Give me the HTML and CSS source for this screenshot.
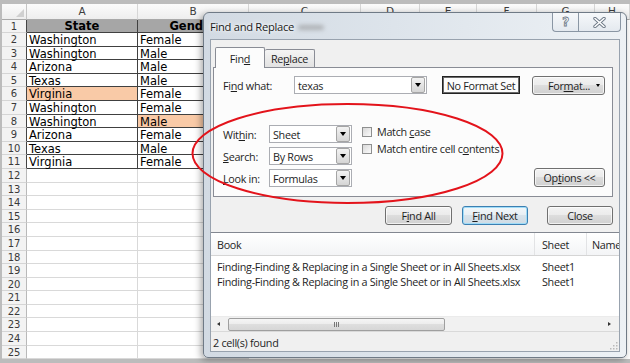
FILE: index.html
```html
<!DOCTYPE html>
<html>
<head>
<meta charset="utf-8">
<title>Find and Replace</title>
<link rel="stylesheet" href="styles.css">
</head>
<body>
<div class="screen">
  <div class="sheet">
    <div class="corner"><span class="tri"></span></div>
    <div class="ch">A</div><div class="ch">B</div><div class="ch">C</div><div class="ch">D</div><div class="ch">E</div><div class="ch">F</div><div class="ch">G</div><div class="ch">H</div>

    <div class="rh t">1</div><div class="c t hd">State</div><div class="c t hd">Gender</div><div class="fill"></div>
    <div class="rh t">2</div><div class="c t">Washington</div><div class="c t">Female</div><div class="fill"></div>
    <div class="rh t">3</div><div class="c t">Washington</div><div class="c t">Male</div><div class="fill"></div>
    <div class="rh t">4</div><div class="c t">Arizona</div><div class="c t">Male</div><div class="fill"></div>
    <div class="rh t">5</div><div class="c t">Texas</div><div class="c t">Male</div><div class="fill"></div>
    <div class="rh t">6</div><div class="c t pe">Virginia</div><div class="c t">Female</div><div class="fill"></div>
    <div class="rh t">7</div><div class="c t">Washington</div><div class="c t">Female</div><div class="fill"></div>
    <div class="rh t">8</div><div class="c t">Washington</div><div class="c t pe">Male</div><div class="fill"></div>
    <div class="rh t">9</div><div class="c t">Arizona</div><div class="c t">Female</div><div class="fill"></div>
    <div class="rh t">10</div><div class="c t">Texas</div><div class="c t">Male</div><div class="fill"></div>
    <div class="rh t">11</div><div class="c t">Virginia</div><div class="c t">Female</div><div class="fill"></div>
    <div class="rh">12</div><div class="c"></div><div class="c"></div><div class="fill"></div>
    <div class="rh">13</div><div class="c"></div><div class="c"></div><div class="fill"></div>
    <div class="rh">14</div><div class="c"></div><div class="c"></div><div class="fill"></div>
    <div class="rh">15</div><div class="c"></div><div class="c"></div><div class="fill"></div>
    <div class="rh">16</div><div class="c"></div><div class="c"></div><div class="fill"></div>
    <div class="rh">17</div><div class="c"></div><div class="c"></div><div class="fill"></div>
    <div class="rh">18</div><div class="c"></div><div class="c"></div><div class="fill"></div>
    <div class="rh">19</div><div class="c"></div><div class="c"></div><div class="fill"></div>
    <div class="rh">20</div><div class="c"></div><div class="c"></div><div class="fill"></div>
    <div class="rh">21</div><div class="c"></div><div class="c"></div><div class="fill"></div>
    <div class="rh">22</div><div class="c"></div><div class="c"></div><div class="fill"></div>
    <div class="rh">23</div><div class="c"></div><div class="c"></div><div class="fill"></div>
    <div class="rh">24</div><div class="c"></div><div class="c"></div><div class="fill"></div>
    <div class="rh">25</div><div class="c"></div><div class="c"></div><div class="fill"></div>
  </div>

  <div class="dialog">
    <div class="titlebar">
      <span class="title">Find and Replace</span>
      <span class="smudge"></span>
      <div class="caps">
        <div class="cap help"><span class="q">?</span></div>
        <div class="cap close">
          <svg width="13" height="11" viewBox="0 0 13 11"><path d="M2 1.5 L11 9.5 M11 1.5 L2 9.5" stroke="#6d7886" stroke-width="3.4" stroke-linecap="round" fill="none"/><path d="M2 1.5 L11 9.5 M11 1.5 L2 9.5" stroke="#ffffff" stroke-width="1.6" stroke-linecap="round" fill="none"/></svg>
        </div>
      </div>
    </div>

    <div class="client">
      <div class="tabs">
        <div class="tab on">Fin<u>d</u></div>
        <div class="tab">Re<u>p</u>lace</div>
      </div>
      <div class="panel">
        <div class="findrow">
          <span class="lbl fw">Fi<u>n</u>d what:</span>
          <div class="combo cw"><span>texas</span><span class="ar"></span></div>
          <div class="nofmt">No Format Set</div>
          <div class="btn fmt"><span>For<u>m</u>at...</span><span class="caret"></span></div>
        </div>
        <div class="opts">
          <div class="selects">
            <div class="srow"><span class="lbl sl">Wit<u>h</u>in:</span><div class="combo cs"><span>Sheet</span><span class="ar"></span></div></div>
            <div class="srow"><span class="lbl sl"><u>S</u>earch:</span><div class="combo cs"><span>By Rows</span><span class="ar"></span></div></div>
            <div class="srow"><span class="lbl sl"><u>L</u>ook in:</span><div class="combo cs"><span>Formulas</span><span class="ar"></span></div></div>
          </div>
          <div class="checks">
            <div class="chk"><span class="box"></span><span>Match <u>c</u>ase</span></div>
            <div class="chk"><span class="box"></span><span>Match entire cell c<u>o</u>ntents</span></div>
          </div>
          <div class="btn opt">Op<u>t</u>ions &lt;&lt;</div>
        </div>
      </div>

      <div class="actions">
        <div class="btn a1">F<u>i</u>nd All</div>
        <div class="btn a2 def"><span><u>F</u>ind Next</span></div>
        <div class="btn a3">Close</div>
      </div>

      <div class="results">
        <div class="lhead">
          <div class="col cb">Book</div>
          <div class="col cs2">Sheet</div>
          <div class="col cn">Name</div>
        </div>
        <div class="lrows">
          <div class="lrow"><div class="col cb">Finding-Finding &amp; Replacing in a Single Sheet or in All Sheets.xlsx</div><div class="col cs2">Sheet1</div><div class="col cn"></div></div>
          <div class="lrow"><div class="col cb">Finding-Finding &amp; Replacing in a Single Sheet or in All Sheets.xlsx</div><div class="col cs2">Sheet1</div><div class="col cn"></div></div>
        </div>
        <div class="hscroll">
          <span class="sarrow l"></span>
          <div class="thumb"><span class="grip"></span><span class="grip"></span><span class="grip"></span></div>
          <span class="sarrow r"></span>
        </div>
      </div>

      <div class="status">
        <span>2 cell(s) found</span>
        <svg class="sgrip" width="9" height="9" viewBox="0 0 9 9"><g fill="#b9b9b9"><rect x="7" y="1" width="1.5" height="1.5"/><rect x="4" y="4" width="1.5" height="1.5"/><rect x="7" y="4" width="1.5" height="1.5"/><rect x="1" y="7" width="1.5" height="1.5"/><rect x="4" y="7" width="1.5" height="1.5"/><rect x="7" y="7" width="1.5" height="1.5"/></g></svg>
      </div>
    </div>
  </div>

  <svg class="mark" width="630" height="363" viewBox="0 0 630 363"><ellipse cx="347.5" cy="153.5" rx="155" ry="49.5" fill="none" stroke="#e3131b" stroke-width="2"/></svg>
</div>
</body>
</html>
```

FILE: styles.css
```css
html, body { margin: 0; padding: 0; }

.screen {
  position: relative;
  width: 630px;
  height: 363px;
  overflow: hidden;
  box-sizing: border-box;
  padding: 4px 0 0 2px;
  background: #bcbcbc;
}

/* ---------- spreadsheet ---------- */
.sheet {
  display: grid;
  grid-template-columns: 25px 111px 111px 112px 59px 57px 60px 58px 1fr;
  grid-template-rows: 16px 13px repeat(24, 13.6px);
  background: #fff;
  font-family: "DejaVu Sans", Verdana, sans-serif;
}
.corner {
  box-sizing: border-box;
  background: linear-gradient(#fbfbfb, #eeeeee);
  border-right: 1px solid #c4c4c4;
  border-bottom: 1px solid #a9a9a9;
  display: flex;
  align-items: flex-end;
  justify-content: flex-end;
  padding: 0 2px 2px 0;
}
.tri {
  width: 0; height: 0;
  border-left: 8px solid transparent;
  border-bottom: 8px solid #d0d0d0;
}
.ch {
  box-sizing: border-box;
  background: linear-gradient(#fbfbfb, #eeeeee);
  border-right: 1px solid #d6d6d6;
  border-bottom: 1px solid #a9a9a9;
  font-size: 10.5px;
  line-height: 15px;
  color: #3c3c3c;
  text-align: center;
}
.rh {
  box-sizing: border-box;
  background: #f3f3f3;
  border-right: 1px solid #b9b9b9;
  border-bottom: 1px solid #d5d5d5;
  font-size: 10px;
  line-height: 14px;
  color: #3a3a3a;
  text-align: center;
}
.rh.t { border-right-color: #444; }
.c {
  box-sizing: border-box;
  border-right: 1px solid #d9d9d9;
  border-bottom: 1px solid #d9d9d9;
  font-size: 11.5px;
  line-height: 13px;
  padding: 1px 0 0 2px;
  color: #000;
  white-space: nowrap;
}
.c.t { border-color: #404040; }
.c.hd { background: #a6a6a6; font-weight: bold; text-align: center; padding: 0; line-height: 13px; }
.c.pe { background: #f9caa7; }
.fill { grid-column: span 6; background: #fff; }

/* ---------- dialog ---------- */
.dialog {
  position: absolute;
  left: 203px;
  top: 12px;
  width: 424px;
  height: 346px;
  box-sizing: border-box;
  border: 1px solid #6f7a86;
  border-radius: 6px 6px 5px 5px;
  background: linear-gradient(90deg, #d2dae3 0%, #dde4eb 45%, #edf1f5 100%);
  box-shadow: -2px 2px 7px rgba(0,0,0,0.35);
  padding: 0 6px 5px 6px;
  display: flex;
  flex-direction: column;
  font-family: "Open Sans", "Noto Sans", sans-serif;
  font-size: 10.8px;
  letter-spacing: -0.3px;
  color: #1e1e1e;
}
.titlebar {
  flex: none;
  height: 26px;
  display: flex;
  align-items: flex-start;
}
.title {
  font-size: 11.2px;
  margin-top: 6px;
  color: #1b1b1b;
  text-shadow: 0 0 6px #fff, 0 0 3px #fff;
}
.smudge {
  width: 26px;
  height: 5px;
  margin: 12px 0 0 4px;
  background: #8c8c8c;
  filter: blur(2px);
  opacity: 0.55;
  border-radius: 3px;
}
.caps {
  margin-left: auto;
  margin-right: -1px;
  display: flex;
  height: 19px;
}
.cap {
  box-sizing: border-box;
  border: 1px solid #8a96a4;
  border-top: none;
  background: linear-gradient(#f6f8fa, #e4e9ef);
  display: flex;
  align-items: center;
  justify-content: center;
}
.cap.help { width: 26px; border-right: none; border-radius: 0 0 0 4px; }
.cap.close { width: 43px; border-radius: 0 0 4px 0; }
.q {
  font-family: "DejaVu Sans", sans-serif;
  font-size: 12px;
  font-weight: bold;
  color: #fff;
  -webkit-text-stroke: 0.8px #6d7886;
  line-height: 12px;
}

.client {
  flex: 1;
  min-height: 0;
  border: 1px solid #98a2ae;
  background: #f0f0f0;
  display: flex;
  flex-direction: column;
}
.tabs {
  display: flex;
  align-items: flex-end;
  height: 20px;
  margin: 7px 0 0 4px;
  position: relative;
  z-index: 1;
}
.tab {
  box-sizing: border-box;
  width: 50px;
  height: 18px;
  border: 1px solid #898c95;
  border-bottom: none;
  border-left: none;
  background: linear-gradient(#f4f4f4, #e2e2e2);
  display: flex;
  align-items: center;
  justify-content: center;
  border-radius: 2px 2px 0 0;
}
.tab.on {
  height: 21px;
  margin-bottom: -1px;
  border-left: 1px solid #898c95;
  background: #fcfcfc;
}
.panel {
  box-sizing: border-box;
  margin: 0 6px 0 2px;
  height: 130px;
  border: 1px solid #898c95;
  background: #fcfcfc;
  padding: 8px 7px 9px 9px;
  display: flex;
  flex-direction: column;
}
.findrow { display: flex; align-items: center; height: 18px; }
.lbl { white-space: nowrap; }
.lbl.fw { width: 71px; }
.lbl.sl { width: 46px; }
.combo {
  box-sizing: border-box;
  height: 18px;
  border: 1px solid #abadb3;
  background: #fff;
  display: flex;
  align-items: center;
  padding: 0 1px 0 3px;
}
.combo.cw { width: 133px; }
.combo.cs { width: 83px; }
.ar {
  margin-left: auto;
  box-sizing: border-box;
  width: 14px;
  height: 16px;
  border: 1px solid #a5a5a5;
  border-radius: 2px;
  background: linear-gradient(#f3f3f3, #d5d5d5);
  display: flex;
  align-items: center;
  justify-content: center;
}
.ar::after {
  content: "";
  border-left: 3.5px solid transparent;
  border-right: 3.5px solid transparent;
  border-top: 4px solid #000;
}
.nofmt {
  box-sizing: border-box;
  width: 78px;
  height: 18px;
  margin-left: 15px;
  border: 1px solid #222;
  box-shadow: inset 0 0 0 1px #6a6a6a;
  background: #fcfcfc;
  display: flex;
  align-items: center;
  justify-content: center;
}
.btn {
  box-sizing: border-box;
  height: 19px;
  border: 1px solid #707070;
  border-radius: 3px;
  background: linear-gradient(#f3f3f3 0%, #ebebeb 49%, #dddddd 50%, #d0d0d0 100%);
  box-shadow: inset 0 0 0 1px rgba(255,255,255,0.7);
  display: flex;
  align-items: center;
  justify-content: center;
  white-space: nowrap;
}
.btn.fmt {
  width: 73px;
  margin-left: 12px;
  justify-content: flex-start;
  padding-left: 15px;
}
.caret {
  margin-left: auto;
  margin-right: 4px;
  border-left: 2.5px solid transparent;
  border-right: 2.5px solid transparent;
  border-top: 3px solid #000;
}
.opts { display: flex; margin-top: 31px; flex: 1; }
.selects { display: flex; flex-direction: column; gap: 4px; }
.srow { display: flex; align-items: center; height: 18px; }
.checks { margin-left: 10px; margin-top: -2px; }
.chk { display: flex; align-items: center; height: 17px; white-space: nowrap; }
.box {
  box-sizing: border-box;
  width: 10px;
  height: 10px;
  border: 1px solid #8e8f8f;
  background: linear-gradient(135deg, #d8d8d8, #fbfbfb);
  margin-right: 5px;
}
.btn.opt { width: 71px; margin-left: auto; align-self: flex-end; }

.actions {
  display: flex;
  justify-content: flex-end;
  margin-top: 9px;
  padding-right: 6px;
  height: 19px;
}
.btn.a1 { width: 67px; }
.btn.a2 { width: 66px; margin-left: 10px; }
.btn.a3 { width: 66px; margin-left: 19px; }
.btn.def {
  border-color: #3c7fb1;
  box-shadow: inset 0 0 0 1px #9fdcf8;
  background: linear-gradient(#f2f7fa 0%, #e8eff4 49%, #d8e3eb 50%, #cfdbe4 100%);
}

.results {
  box-sizing: border-box;
  margin-top: 7px;
  height: 99px;
  border-top: 1px solid #828790;
  background: #fff;
  display: flex;
  flex-direction: column;
}
.lhead {
  box-sizing: border-box;
  height: 23px;
  display: flex;
  border-bottom: 1px solid #d5d5d5;
  background: linear-gradient(#ffffff, #f3f4f6);
}
.lhead .col { padding-top: 4px; border-right: 1px solid #e2e3e5; }
.col { box-sizing: border-box; white-space: nowrap; overflow: hidden; }
.cb { width: 324px; padding-left: 6px; }
.cs2 { width: 52px; padding-left: 7px; }
.cn { flex: 1; padding-left: 5px; }
.lhead .cn { border-right: none; }
.lrows { margin-top: 3px; flex: 1; }
.lrow { display: flex; height: 15px; align-items: center; }
.hscroll {
  box-sizing: border-box;
  height: 15px;
  display: flex;
  align-items: center;
  background: #f1f1f1;
  border-top: 1px solid #ebebeb;
}
.sarrow { width: 0; height: 0; border-top: 2.5px solid transparent; border-bottom: 2.5px solid transparent; }
.sarrow.l { border-right: 3px solid #333; margin-left: 6px; }
.sarrow.r { border-left: 3px solid #333; margin-left: auto; margin-right: 8px; }
.thumb {
  box-sizing: border-box;
  width: 217px;
  height: 13px;
  margin-left: 8px;
  border: 1px solid #9f9f9f;
  border-radius: 2px;
  background: linear-gradient(#f5f5f5 0%, #ececec 49%, #dedede 50%, #d6d6d6 100%);
  display: flex;
  align-items: center;
  justify-content: center;
  gap: 1px;
}
.grip { width: 1px; height: 5px; background: #777; }
.status {
  box-sizing: border-box;
  flex: 1;
  display: flex;
  align-items: center;
  padding: 2px 1px 0 2px;
  background: #f0f0f0;
  border-top: 1px solid #d9d9d9;
}
.sgrip { margin-left: auto; align-self: flex-end; margin-bottom: 1px; }

.mark {
  position: absolute;
  left: 0;
  top: 0;
  pointer-events: none;
}
```
